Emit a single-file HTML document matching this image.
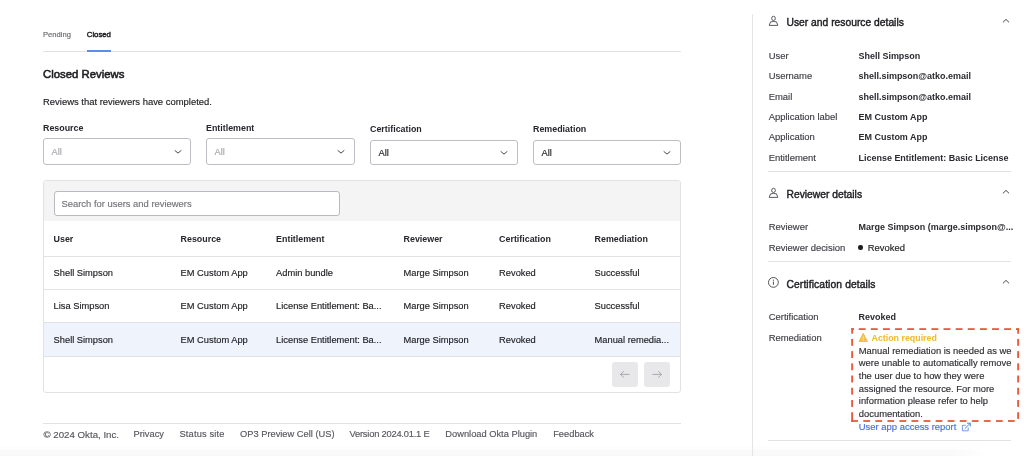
<!DOCTYPE html>
<html><head><meta charset="utf-8"><title>Closed Reviews</title>
<style>
html,body{margin:0;padding:0;background:#fff;}
body{width:1024px;height:456px;position:relative;overflow:hidden;font-family:"Liberation Sans",sans-serif;}
.t{position:absolute;white-space:nowrap;}
.r{position:absolute;}
svg.r{display:block;}
</style></head><body>
<div id="w" style="position:absolute;left:0;top:0;width:1024px;height:456px;will-change:transform;">
<div class="r" style="left:0px;top:446px;width:1024px;height:4px;background:linear-gradient(to right,#fdfdfd 955px,#fff 985px);"></div>
<div class="r" style="left:0px;top:450px;width:1024px;height:6px;background:linear-gradient(to right,#f9f9f9 950px,#fff 990px);"></div>
<div class="t" style="left:43px;top:30.57px;font-size:7.6px;line-height:7.6px;font-weight:400;color:#6a6a70;-webkit-text-stroke:0.15px #6a6a70;">Pending</div>
<div class="t" style="left:86.8px;top:30.64px;font-size:7.75px;line-height:7.75px;font-weight:400;color:#1d1d21;-webkit-text-stroke:0.45px #1d1d21;">Closed</div>
<div class="r" style="left:43px;top:51px;width:638px;height:1px;background:#e1e1e6;"></div>
<div class="r" style="left:87px;top:50px;width:24px;height:2px;background:#5f8ce4;"></div>
<div class="t" style="left:43px;top:68.69px;font-size:11.35px;line-height:11.35px;font-weight:400;color:#1d1d21;-webkit-text-stroke:0.55px #1d1d21;">Closed Reviews</div>
<div class="t" style="left:43px;top:96.70px;font-size:9.45px;line-height:9.45px;font-weight:400;color:#1d1d21;-webkit-text-stroke:0.15px #1d1d21;">Reviews that reviewers have completed.</div>
<div class="t" style="left:43px;top:123.67px;font-size:8.9px;line-height:8.9px;font-weight:700;color:#26262c;">Resource</div>
<div class="r" style="left:43px;top:138px;width:148px;height:27px;box-sizing:border-box;border:1px solid #bdbdc4;border-radius:3px;background:#fff;"></div>
<div class="t" style="left:51.5px;top:147.83px;font-size:9.3px;line-height:9.3px;font-weight:400;color:#a8a8ae;-webkit-text-stroke:0.15px #a8a8ae;">All</div>
<svg class="r" style="left:173.5px;top:148.8px" width="8" height="6" viewBox="0 0 8 6"><path d="M0.7 1.35 L4 4.1 L7.3 1.35" fill="none" stroke="#34343a" stroke-width="0.9"/></svg>
<div class="t" style="left:206px;top:123.67px;font-size:8.9px;line-height:8.9px;font-weight:700;color:#26262c;">Entitlement</div>
<div class="r" style="left:206px;top:138px;width:148.5px;height:27px;box-sizing:border-box;border:1px solid #bdbdc4;border-radius:3px;background:#fff;"></div>
<div class="t" style="left:214.5px;top:147.83px;font-size:9.3px;line-height:9.3px;font-weight:400;color:#a8a8ae;-webkit-text-stroke:0.15px #a8a8ae;">All</div>
<svg class="r" style="left:337px;top:148.8px" width="8" height="6" viewBox="0 0 8 6"><path d="M0.7 1.35 L4 4.1 L7.3 1.35" fill="none" stroke="#34343a" stroke-width="0.9"/></svg>
<div class="t" style="left:370px;top:125.37px;font-size:8.9px;line-height:8.9px;font-weight:700;color:#26262c;">Certification</div>
<div class="r" style="left:370px;top:139.5px;width:147.5px;height:25.5px;box-sizing:border-box;border:1px solid #bdbdc4;border-radius:3px;background:#fff;"></div>
<div class="t" style="left:378.5px;top:148.58px;font-size:9.3px;line-height:9.3px;font-weight:400;color:#1d1d21;-webkit-text-stroke:0.15px #1d1d21;">All</div>
<svg class="r" style="left:500.2px;top:150.05px" width="8" height="6" viewBox="0 0 8 6"><path d="M0.7 1.35 L4 4.1 L7.3 1.35" fill="none" stroke="#34343a" stroke-width="0.9"/></svg>
<div class="t" style="left:533px;top:125.37px;font-size:8.9px;line-height:8.9px;font-weight:700;color:#26262c;">Remediation</div>
<div class="r" style="left:533px;top:139.5px;width:147.8px;height:25.5px;box-sizing:border-box;border:1px solid #bdbdc4;border-radius:3px;background:#fff;"></div>
<div class="t" style="left:541.5px;top:148.58px;font-size:9.3px;line-height:9.3px;font-weight:400;color:#1d1d21;-webkit-text-stroke:0.15px #1d1d21;">All</div>
<svg class="r" style="left:663.3px;top:150.05px" width="8" height="6" viewBox="0 0 8 6"><path d="M0.7 1.35 L4 4.1 L7.3 1.35" fill="none" stroke="#34343a" stroke-width="0.9"/></svg>
<div class="r" style="left:43px;top:180px;width:638px;height:213px;box-sizing:border-box;border:1px solid #e1e1e6;border-radius:3px;background:#fff;overflow:hidden;"></div>
<div class="r" style="left:44px;top:181px;width:636px;height:40px;background:#f4f4f5;border-radius:2px 2px 0 0;"></div>
<div class="r" style="left:54px;top:191px;width:286px;height:25px;box-sizing:border-box;border:1px solid #b9b9c0;border-radius:3px;background:#fff;"></div>
<div class="t" style="left:61.5px;top:198.63px;font-size:9.42px;line-height:9.42px;font-weight:400;color:#74747b;-webkit-text-stroke:0.15px #74747b;">Search for users and reviewers</div>
<div class="t" style="left:53.6px;top:235.17px;font-size:8.9px;line-height:8.9px;font-weight:700;color:#26262c;">User</div>
<div class="t" style="left:180.6px;top:235.17px;font-size:8.9px;line-height:8.9px;font-weight:700;color:#26262c;">Resource</div>
<div class="t" style="left:276.1px;top:235.17px;font-size:8.9px;line-height:8.9px;font-weight:700;color:#26262c;">Entitlement</div>
<div class="t" style="left:403.6px;top:235.17px;font-size:8.9px;line-height:8.9px;font-weight:700;color:#26262c;">Reviewer</div>
<div class="t" style="left:499.1px;top:235.17px;font-size:8.9px;line-height:8.9px;font-weight:700;color:#26262c;">Certification</div>
<div class="t" style="left:594.6px;top:235.17px;font-size:8.9px;line-height:8.9px;font-weight:700;color:#26262c;">Remediation</div>
<div class="r" style="left:44px;top:256px;width:636px;height:1px;background:#e1e1e6;"></div>
<div class="t" style="left:53.6px;top:269.13px;font-size:9.3px;line-height:9.3px;font-weight:400;color:#1d1d21;-webkit-text-stroke:0.15px #1d1d21;">Shell Simpson</div>
<div class="t" style="left:180.6px;top:269.13px;font-size:9.3px;line-height:9.3px;font-weight:400;color:#1d1d21;-webkit-text-stroke:0.15px #1d1d21;">EM Custom App</div>
<div class="t" style="left:276.1px;top:269.13px;font-size:9.3px;line-height:9.3px;font-weight:400;color:#1d1d21;-webkit-text-stroke:0.15px #1d1d21;">Admin bundle</div>
<div class="t" style="left:403.6px;top:269.13px;font-size:9.3px;line-height:9.3px;font-weight:400;color:#1d1d21;-webkit-text-stroke:0.15px #1d1d21;">Marge Simpson</div>
<div class="t" style="left:499.1px;top:269.13px;font-size:9.3px;line-height:9.3px;font-weight:400;color:#1d1d21;-webkit-text-stroke:0.15px #1d1d21;">Revoked</div>
<div class="t" style="left:594.6px;top:269.13px;font-size:9.3px;line-height:9.3px;font-weight:400;color:#1d1d21;-webkit-text-stroke:0.15px #1d1d21;">Successful</div>
<div class="r" style="left:44px;top:289px;width:636px;height:1px;background:#e1e1e6;"></div>
<div class="t" style="left:53.6px;top:302.48px;font-size:9.3px;line-height:9.3px;font-weight:400;color:#1d1d21;-webkit-text-stroke:0.15px #1d1d21;">Lisa Simpson</div>
<div class="t" style="left:180.6px;top:302.48px;font-size:9.3px;line-height:9.3px;font-weight:400;color:#1d1d21;-webkit-text-stroke:0.15px #1d1d21;">EM Custom App</div>
<div class="t" style="left:276.1px;top:302.48px;font-size:9.3px;line-height:9.3px;font-weight:400;color:#1d1d21;-webkit-text-stroke:0.15px #1d1d21;">License Entitlement: Ba...</div>
<div class="t" style="left:403.6px;top:302.48px;font-size:9.3px;line-height:9.3px;font-weight:400;color:#1d1d21;-webkit-text-stroke:0.15px #1d1d21;">Marge Simpson</div>
<div class="t" style="left:499.1px;top:302.48px;font-size:9.3px;line-height:9.3px;font-weight:400;color:#1d1d21;-webkit-text-stroke:0.15px #1d1d21;">Revoked</div>
<div class="t" style="left:594.6px;top:302.48px;font-size:9.3px;line-height:9.3px;font-weight:400;color:#1d1d21;-webkit-text-stroke:0.15px #1d1d21;">Successful</div>
<div class="r" style="left:44px;top:322px;width:636px;height:1px;background:#e1e1e6;"></div>
<div class="r" style="left:44px;top:323px;width:636px;height:33px;background:#eff3fc;"></div>
<div class="t" style="left:53.6px;top:335.83px;font-size:9.3px;line-height:9.3px;font-weight:400;color:#1d1d21;-webkit-text-stroke:0.15px #1d1d21;">Shell Simpson</div>
<div class="t" style="left:180.6px;top:335.83px;font-size:9.3px;line-height:9.3px;font-weight:400;color:#1d1d21;-webkit-text-stroke:0.15px #1d1d21;">EM Custom App</div>
<div class="t" style="left:276.1px;top:335.83px;font-size:9.3px;line-height:9.3px;font-weight:400;color:#1d1d21;-webkit-text-stroke:0.15px #1d1d21;">License Entitlement: Ba...</div>
<div class="t" style="left:403.6px;top:335.83px;font-size:9.3px;line-height:9.3px;font-weight:400;color:#1d1d21;-webkit-text-stroke:0.15px #1d1d21;">Marge Simpson</div>
<div class="t" style="left:499.1px;top:335.83px;font-size:9.3px;line-height:9.3px;font-weight:400;color:#1d1d21;-webkit-text-stroke:0.15px #1d1d21;">Revoked</div>
<div class="t" style="left:594.6px;top:335.83px;font-size:9.3px;line-height:9.3px;font-weight:400;color:#1d1d21;-webkit-text-stroke:0.15px #1d1d21;">Manual remedia...</div>
<div class="r" style="left:44px;top:356px;width:636px;height:1px;background:#e1e1e6;"></div>
<div class="r" style="left:612px;top:362px;width:26px;height:25px;background:#e8e8eb;border-radius:3px;"></div>
<div class="r" style="left:644px;top:362px;width:26px;height:25px;background:#e8e8eb;border-radius:3px;"></div>
<svg class="r" style="left:612px;top:362px" width="26" height="25" viewBox="0 0 26 25"><path d="M8.5 12.4 H17.5 M11.8 9.1 L8.5 12.4 L11.8 15.7" fill="none" stroke="#a0a0a6" stroke-width="0.9"/></svg>
<svg class="r" style="left:644px;top:362px" width="26" height="25" viewBox="0 0 26 25"><path d="M8.5 12.4 H17.5 M14.2 9.1 L17.5 12.4 L14.2 15.7" fill="none" stroke="#a0a0a6" stroke-width="0.9"/></svg>
<div class="r" style="left:43px;top:423px;width:638px;height:1px;background:#e1e1e6;"></div>
<div class="t" style="left:43.5px;top:429.89px;font-size:9.7px;line-height:9.7px;font-weight:400;color:#56565e;-webkit-text-stroke:0.15px #56565e;">© 2024 Okta, Inc.</div>
<div class="t" style="left:133.5px;top:430.23px;font-size:9.3px;line-height:9.3px;font-weight:400;color:#56565e;-webkit-text-stroke:0.15px #56565e;">Privacy</div>
<div class="t" style="left:179.5px;top:430.23px;font-size:9.3px;line-height:9.3px;font-weight:400;color:#56565e;letter-spacing:0.15px;-webkit-text-stroke:0.15px #56565e;">Status site</div>
<div class="t" style="left:240px;top:430.23px;font-size:9.3px;line-height:9.3px;font-weight:400;color:#56565e;-webkit-text-stroke:0.15px #56565e;">OP3 Preview Cell (US)</div>
<div class="t" style="left:349.5px;top:430.23px;font-size:9.3px;line-height:9.3px;font-weight:400;color:#56565e;letter-spacing:-0.2px;-webkit-text-stroke:0.15px #56565e;">Version 2024.01.1 E</div>
<div class="t" style="left:445.3px;top:430.23px;font-size:9.3px;line-height:9.3px;font-weight:400;color:#56565e;-webkit-text-stroke:0.15px #56565e;">Download Okta Plugin</div>
<div class="t" style="left:553.2px;top:430.23px;font-size:9.3px;line-height:9.3px;font-weight:400;color:#56565e;-webkit-text-stroke:0.15px #56565e;">Feedback</div>
<div class="r" style="left:752px;top:14px;width:1px;height:442px;background:#e4e4e8;"></div>
<svg class="r" style="left:768px;top:15px" width="12" height="12" viewBox="0 0 12 12"><ellipse cx="5.5" cy="3.4" rx="1.85" ry="2.15" fill="none" stroke="#4a4a50" stroke-width="0.9"/><path d="M1.2 10.4 L2.5 6.9 Q5.5 6.0 8.5 6.9 L9.8 10.4 Z" fill="none" stroke="#4a4a50" stroke-width="0.9" stroke-linejoin="round"/></svg>
<div class="t" style="left:786.5px;top:17.78px;font-size:10.3px;line-height:10.3px;font-weight:400;color:#1d1d21;-webkit-text-stroke:0.4px #1d1d21;">User and resource details</div>
<svg class="r" style="left:1002px;top:17.5px" width="8" height="6" viewBox="0 0 8 6"><path d="M0.9 4.4 L4 1.4 L7.1 4.4" fill="none" stroke="#4a4a50" stroke-width="1"/></svg>
<div class="t" style="left:768.7px;top:50.70px;font-size:9.45px;line-height:9.45px;font-weight:400;color:#3d3d44;-webkit-text-stroke:0.15px #3d3d44;">User</div>
<div class="t" style="left:858.5px;top:51.71px;font-size:8.97px;line-height:8.97px;font-weight:700;color:#2a2a30;">Shell Simpson</div>
<div class="t" style="left:768.7px;top:71.12px;font-size:9.45px;line-height:9.45px;font-weight:400;color:#3d3d44;-webkit-text-stroke:0.15px #3d3d44;">Username</div>
<div class="t" style="left:858.5px;top:72.13px;font-size:8.97px;line-height:8.97px;font-weight:700;color:#2a2a30;">shell.simpson@atko.email</div>
<div class="t" style="left:768.7px;top:91.54px;font-size:9.45px;line-height:9.45px;font-weight:400;color:#3d3d44;-webkit-text-stroke:0.15px #3d3d44;">Email</div>
<div class="t" style="left:858.5px;top:92.55px;font-size:8.97px;line-height:8.97px;font-weight:700;color:#2a2a30;">shell.simpson@atko.email</div>
<div class="t" style="left:768.7px;top:111.96px;font-size:9.45px;line-height:9.45px;font-weight:400;color:#3d3d44;-webkit-text-stroke:0.15px #3d3d44;">Application label</div>
<div class="t" style="left:858.5px;top:112.97px;font-size:8.97px;line-height:8.97px;font-weight:700;color:#2a2a30;">EM Custom App</div>
<div class="t" style="left:768.7px;top:132.38px;font-size:9.45px;line-height:9.45px;font-weight:400;color:#3d3d44;-webkit-text-stroke:0.15px #3d3d44;">Application</div>
<div class="t" style="left:858.5px;top:133.39px;font-size:8.97px;line-height:8.97px;font-weight:700;color:#2a2a30;">EM Custom App</div>
<div class="t" style="left:768.7px;top:152.80px;font-size:9.45px;line-height:9.45px;font-weight:400;color:#3d3d44;-webkit-text-stroke:0.15px #3d3d44;">Entitlement</div>
<div class="t" style="left:858.5px;top:153.81px;font-size:8.97px;line-height:8.97px;font-weight:700;color:#2a2a30;">License Entitlement: Basic License</div>
<div class="r" style="left:768px;top:171px;width:243px;height:1px;background:#e1e1e6;"></div>
<svg class="r" style="left:768px;top:186.5px" width="12" height="12" viewBox="0 0 12 12"><ellipse cx="5.5" cy="3.4" rx="1.85" ry="2.15" fill="none" stroke="#4a4a50" stroke-width="0.9"/><path d="M1.2 10.4 L2.5 6.9 Q5.5 6.0 8.5 6.9 L9.8 10.4 Z" fill="none" stroke="#4a4a50" stroke-width="0.9" stroke-linejoin="round"/></svg>
<div class="t" style="left:786.5px;top:189.68px;font-size:10.3px;line-height:10.3px;font-weight:400;color:#1d1d21;-webkit-text-stroke:0.4px #1d1d21;">Reviewer details</div>
<svg class="r" style="left:1002px;top:189px" width="8" height="6" viewBox="0 0 8 6"><path d="M0.9 4.4 L4 1.4 L7.1 4.4" fill="none" stroke="#4a4a50" stroke-width="1"/></svg>
<div class="t" style="left:768.7px;top:222.40px;font-size:9.45px;line-height:9.45px;font-weight:400;color:#3d3d44;-webkit-text-stroke:0.15px #3d3d44;">Reviewer</div>
<div class="t" style="left:858.5px;top:222.81px;font-size:8.97px;line-height:8.97px;font-weight:700;color:#2a2a30;">Marge Simpson (marge.simpson@...</div>
<div class="t" style="left:768.7px;top:243.00px;font-size:9.45px;line-height:9.45px;font-weight:400;color:#3d3d44;-webkit-text-stroke:0.15px #3d3d44;">Reviewer decision</div>
<div class="r" style="left:858.4px;top:245.4px;width:4.4px;height:4.4px;background:#1d1d21;border-radius:50%;"></div>
<div class="t" style="left:867.7px;top:243.00px;font-size:9.45px;line-height:9.45px;font-weight:400;color:#1d1d21;-webkit-text-stroke:0.15px #1d1d21;">Revoked</div>
<div class="r" style="left:768px;top:261px;width:243px;height:1px;background:#e1e1e6;"></div>
<svg class="r" style="left:767px;top:276px" width="13" height="13" viewBox="0 0 13 13"><circle cx="6.4" cy="6.4" r="4.9" fill="none" stroke="#4a4a50" stroke-width="0.95"/><path d="M6.4 5.6 V8.8" stroke="#4a4a50" stroke-width="1"/><circle cx="6.4" cy="4.2" r="0.6" fill="#4a4a50"/></svg>
<div class="t" style="left:786.5px;top:279.78px;font-size:10.3px;line-height:10.3px;font-weight:400;color:#1d1d21;-webkit-text-stroke:0.4px #1d1d21;letter-spacing:0.1px;">Certification details</div>
<svg class="r" style="left:1002px;top:279px" width="8" height="6" viewBox="0 0 8 6"><path d="M0.9 4.4 L4 1.4 L7.1 4.4" fill="none" stroke="#4a4a50" stroke-width="1"/></svg>
<div class="t" style="left:768.7px;top:311.90px;font-size:9.45px;line-height:9.45px;font-weight:400;color:#3d3d44;-webkit-text-stroke:0.15px #3d3d44;">Certification</div>
<div class="t" style="left:858.5px;top:312.81px;font-size:8.97px;line-height:8.97px;font-weight:700;color:#2a2a30;">Revoked</div>
<div class="t" style="left:768.7px;top:332.50px;font-size:9.45px;line-height:9.45px;font-weight:400;color:#3d3d44;-webkit-text-stroke:0.15px #3d3d44;">Remediation</div>
<svg class="r" style="left:850px;top:327px" width="172" height="97" viewBox="0 0 172 97" fill="#e85a3c"><rect x="1.20" y="1.20" width="2.80" height="1.80"/><rect x="8.70" y="1.20" width="6.90" height="1.80"/><rect x="20.82" y="1.20" width="6.90" height="1.80"/><rect x="32.94" y="1.20" width="6.90" height="1.80"/><rect x="45.06" y="1.20" width="6.90" height="1.80"/><rect x="57.18" y="1.20" width="6.90" height="1.80"/><rect x="69.30" y="1.20" width="6.90" height="1.80"/><rect x="81.42" y="1.20" width="6.90" height="1.80"/><rect x="93.54" y="1.20" width="6.90" height="1.80"/><rect x="105.66" y="1.20" width="6.90" height="1.80"/><rect x="117.78" y="1.20" width="6.90" height="1.80"/><rect x="129.90" y="1.20" width="6.90" height="1.80"/><rect x="142.02" y="1.20" width="6.90" height="1.80"/><rect x="154.14" y="1.20" width="6.90" height="1.80"/><rect x="166.00" y="1.20" width="3.10" height="1.80"/><rect x="1.20" y="1.20" width="1.90" height="5.50"/><rect x="1.20" y="11.90" width="1.90" height="6.90"/><rect x="1.20" y="24.12" width="1.90" height="6.90"/><rect x="1.20" y="36.34" width="1.90" height="6.90"/><rect x="1.20" y="48.56" width="1.90" height="6.90"/><rect x="1.20" y="60.78" width="1.90" height="6.90"/><rect x="1.20" y="73.00" width="1.90" height="6.90"/><rect x="1.20" y="85.22" width="1.90" height="9.68"/><rect x="167.20" y="1.20" width="1.90" height="5.50"/><rect x="167.20" y="11.90" width="1.90" height="6.90"/><rect x="167.20" y="24.12" width="1.90" height="6.90"/><rect x="167.20" y="36.34" width="1.90" height="6.90"/><rect x="167.20" y="48.56" width="1.90" height="6.90"/><rect x="167.20" y="60.78" width="1.90" height="6.90"/><rect x="167.20" y="73.00" width="1.90" height="6.90"/><rect x="167.20" y="85.22" width="1.90" height="6.68"/><rect x="1.20" y="93.10" width="6.80" height="1.80"/><rect x="13.26" y="93.10" width="6.80" height="1.80"/><rect x="25.32" y="93.10" width="6.80" height="1.80"/><rect x="37.38" y="93.10" width="6.80" height="1.80"/><rect x="49.44" y="93.10" width="6.80" height="1.80"/><rect x="61.50" y="93.10" width="6.80" height="1.80"/><rect x="73.56" y="93.10" width="6.80" height="1.80"/><rect x="85.62" y="93.10" width="6.80" height="1.80"/><rect x="97.68" y="93.10" width="6.80" height="1.80"/><rect x="109.74" y="93.10" width="6.80" height="1.80"/><rect x="121.80" y="93.10" width="6.80" height="1.80"/><rect x="133.86" y="93.10" width="6.80" height="1.80"/><rect x="145.92" y="93.10" width="6.80" height="1.80"/><rect x="157.98" y="93.10" width="6.80" height="1.80"/></svg>
<svg class="r" style="left:858px;top:332px" width="11" height="11" viewBox="0 0 11 11"><path d="M5.2 1.2 L9.5 9.5 H1.0 Z" fill="#f2c14a" stroke="#f2c14a" stroke-width="1.0" stroke-linejoin="round"/><path d="M5.25 4.2 V8.8" stroke="#f9e3a6" stroke-width="0.9"/></svg>
<div class="t" style="left:871.5px;top:333.50px;font-size:8.86px;line-height:8.86px;font-weight:700;color:#f1b92a;">Action required</div>
<div class="t" style="left:858.8px;top:345.65px;font-size:9.39px;line-height:9.39px;font-weight:400;color:#2e2e33;-webkit-text-stroke:0.15px #2e2e33;">Manual remediation is needed as we</div>
<div class="t" style="left:858.8px;top:358.30px;font-size:9.39px;line-height:9.39px;font-weight:400;color:#2e2e33;-webkit-text-stroke:0.15px #2e2e33;">were unable to automatically remove</div>
<div class="t" style="left:858.8px;top:370.95px;font-size:9.39px;line-height:9.39px;font-weight:400;color:#2e2e33;-webkit-text-stroke:0.15px #2e2e33;">the user due to how they were</div>
<div class="t" style="left:858.8px;top:383.60px;font-size:9.39px;line-height:9.39px;font-weight:400;color:#2e2e33;-webkit-text-stroke:0.15px #2e2e33;">assigned the resource. For more</div>
<div class="t" style="left:858.8px;top:396.25px;font-size:9.39px;line-height:9.39px;font-weight:400;color:#2e2e33;-webkit-text-stroke:0.15px #2e2e33;">information please refer to help</div>
<div class="t" style="left:858.8px;top:408.90px;font-size:9.39px;line-height:9.39px;font-weight:400;color:#2e2e33;-webkit-text-stroke:0.15px #2e2e33;">documentation.</div>
<div class="t" style="left:858.8px;top:421.80px;font-size:9.45px;line-height:9.45px;font-weight:400;color:#3f72dc;-webkit-text-stroke:0.15px #3f72dc;">User app access report</div>
<svg class="r" style="left:961px;top:422px" width="11" height="10" viewBox="0 0 11 10"><path d="M4.8 3.3 H1.4 V8.8 H7.2 V5.6" fill="none" stroke="#6b93e6" stroke-width="0.95"/><path d="M3.8 6.6 L9.2 1.3 M6 1.2 H9.3 V4.4" fill="none" stroke="#4a7de0" stroke-width="0.95"/></svg>
<div class="r" style="left:768px;top:440px;width:243px;height:1px;background:#e1e1e6;"></div>
</div></body></html>
